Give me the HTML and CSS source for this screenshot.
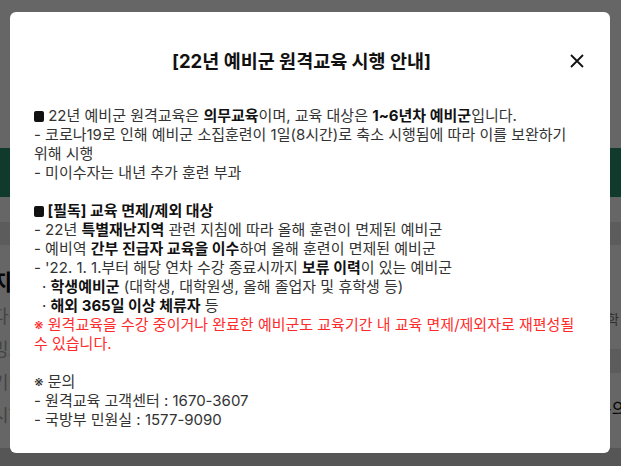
FILE: index.html
```html
<!DOCTYPE html>
<html lang="ko">
<head>
<meta charset="utf-8">
<title>예비군 원격교육 안내</title>
<link rel="stylesheet" href="styles.css">
</head>
<body>
<div class="page">
  <div class="page-top"></div>
  <div class="page-nav"></div>
  <div class="page-gap"></div>
  <div class="page-band"></div>
  <div class="page-main">
    <div class="page-left">
      <div class="pl-title">지원</div>
      <div class="pl-item">다운</div>
      <div class="pl-item">빙고</div>
      <div class="pl-item">기타</div>
      <div class="pl-item">시행</div>
    </div>
    <div class="page-right">
      <div class="pr-num">18</div>
      <div class="pr-sub">휴학</div>
      <div class="pr-band"></div>
      <div class="pr-link">문의</div>
    </div>
  </div>
  <div class="page-foot"></div>
</div>

<div class="overlay">
  <div class="modal">
    <div class="modal-head">
      <h2 class="modal-title">[22년 예비군 원격교육 시행 안내]</h2>
      <button class="modal-close" aria-label="닫기">
        <svg width="14" height="14" viewBox="0 0 14 14"><path d="M1 1L13 13M13 1L1 13" stroke="#111" stroke-width="1.8" fill="none"/></svg>
      </button>
    </div>
    <div class="modal-body">
      <p><span class="sq"></span> 22년 예비군 원격교육은 <b>의무교육</b>이며, 교육 대상은 <b>1~6년차 예비군</b>입니다.</p>
      <p>- 코로나19로 인해 예비군 소집훈련이 1일(8시간)로 축소 시행됨에 따라 이를 보완하기 위해 시행</p>
      <p>- 미이수자는 내년 추가 훈련 부과</p>
      <p class="blank">&nbsp;</p>
      <p><b><span class="sq"></span> [필독] 교육 면제/제외 대상</b></p>
      <p>- 22년 <b>특별재난지역</b> 관련 지침에 따라 올해 훈련이 면제된 예비군</p>
      <p>- 예비역 <b>간부 진급자 교육을 이수</b>하여 올해 훈련이 면제된 예비군</p>
      <p>- '22. 1. 1.부터 해당 연차 수강 종료시까지 <b>보류 이력</b>이 있는 예비군</p>
      <p class="sub">· <b>학생예비군</b> (대학생, 대학원생, 올해 졸업자 및 휴학생 등)</p>
      <p class="sub">· <b>해외 365일 이상 체류자</b> 등</p>
      <p class="red">※ 원격교육을 수강 중이거나 완료한 예비군도 교육기간 내 교육 면제/제외자로 재편성될 수 있습니다.</p>
      <p class="blank">&nbsp;</p>
      <p>※ 문의</p>
      <p>- 원격교육 고객센터 : 1670-3607</p>
      <p>- 국방부 민원실 : 1577-9090</p>
    </div>
  </div>
</div>
</body>
</html>
```

FILE: styles.css
```css
* { box-sizing: border-box; }
html, body { margin: 0; padding: 0; }
body {
  width: 621px;
  height: 466px;
  overflow: hidden;
  position: relative;
  font-family: "Inter", "Noto Sans CJK KR", sans-serif;
  background: #fff;
}

/* underlying page */
.page { height: 466px; display: flex; flex-direction: column; }
.page-top { height: 148px; }
.page-nav { height: 49px; background: #28916e; }
.page-gap { height: 25px; background: #fff; }
.page-band { height: 23px; background: #e6e6e6; }
.page-main { flex: 1; display: flex; justify-content: space-between; overflow: hidden; }
.page-left { margin-left: -8px; padding-top: 24px; }
.pl-title { font-size: 22px; font-weight: 700; color: #111; line-height: 26px; }
.pl-item { font-size: 18px; color: #aaa; line-height: 22px; margin-top: 11px; }
.page-right { margin-right: -14px; padding-top: 50px; width: 40px; }
.pr-num { font-size: 14px; color: #777; line-height: 16px; }
.pr-sub { font-size: 13px; color: #777; line-height: 16px; }
.pr-band { height: 24px; background: #e6e6e6; margin: 22px -10px 0 -10px; }
.pr-link { font-size: 18px; color: #111; margin-top: 26px; line-height: 22px; }
.page-foot { height: 18px; background: #d6d6d6; }

/* overlay + modal */
.overlay {
  position: absolute;
  inset: 0;
  background: rgba(0, 0, 0, 0.6);
  padding: 12px 11px 0 10px;
}
.modal {
  width: 600px;
  height: 441px;
  background: #fff;
  border-radius: 6px;
  padding: 36px 24px 0 24px;
}
.modal-head { display: flex; align-items: center; height: 26px; }
.modal-title {
  flex: 1;
  margin: 0;
  text-align: center;
  font-size: 18.5px;
  font-weight: 700;
  color: #111;
  line-height: 26px;
}
.modal-close {
  width: 16px;
  height: 16px;
  padding: 0;
  margin: 0 1px 0 0;
  border: 0;
  background: none;
  display: flex;
  align-items: center;
  justify-content: center;
}
.modal-body {
  margin-top: 32px;
  font-size: 15px;
  line-height: 19px;
  color: #333;
  word-break: keep-all;
}
.modal-body p { margin: 0; }
.modal-body b { color: #111; font-weight: 700; }
.modal-body .sub { padding-left: 8px; }
.modal-body .red { color: #ff2b2b; }
.sq {
  display: inline-block;
  width: 10px;
  height: 11px;
  border-radius: 2px;
  background: #111;
  vertical-align: -1px;
}
```
